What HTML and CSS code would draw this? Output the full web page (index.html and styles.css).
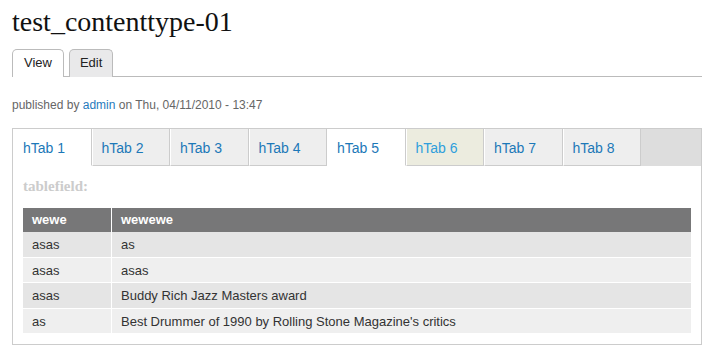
FILE: index.html
```
<!DOCTYPE html>
<html>
<head>
<meta charset="utf-8">
<link rel="stylesheet" href="styles.css">
</head>
<body>
<div class="page">
  <h1 class="title">test_contenttype-01</h1>
  <ul class="local-tabs">
    <li class="ltab active">View</li>
    <li class="ltab">Edit</li>
  </ul>
  <p class="submitted">published by <a class="user" href="#">admin</a> on Thu, 04/11/2010 - 13:47</p>
  <div class="htabs">
    <ul class="htab-list">
      <li class="htab active"><a href="#">hTab 1</a></li>
      <li class="htab"><a href="#">hTab 2</a></li>
      <li class="htab"><a href="#">hTab 3</a></li>
      <li class="htab"><a href="#">hTab 4</a></li>
      <li class="htab active"><a href="#">hTab 5</a></li>
      <li class="htab hover"><a href="#">hTab 6</a></li>
      <li class="htab"><a href="#">hTab 7</a></li>
      <li class="htab"><a href="#">hTab 8</a></li>
    </ul>
    <div class="panel">
      <div class="field-label">tablefield:</div>
      <table class="tf">
        <thead>
          <tr><th class="c1">wewe</th><th>wewewe</th></tr>
        </thead>
        <tbody>
          <tr class="odd"><td class="c1">asas</td><td>as</td></tr>
          <tr class="even"><td class="c1">asas</td><td>asas</td></tr>
          <tr class="odd"><td class="c1">asas</td><td>Buddy Rich Jazz Masters award</td></tr>
          <tr class="even last"><td class="c1">as</td><td>Best Drummer of 1990 by Rolling Stone Magazine's critics</td></tr>
        </tbody>
      </table>
    </div>
  </div>
</div>
</body>
</html>
```
FILE: styles.css
```
html, body {
  margin: 0;
  padding: 0;
  background: #fff;
}
.page {
  width: 690px;
  padding-left: 12px;
  font-family: "Liberation Sans", Arial, sans-serif;
}
.title {
  margin: 6px 0 0;
  font-family: "Liberation Serif", "Times New Roman", serif;
  font-weight: normal;
  font-size: 28px;
  line-height: 32px;
  color: #111;
}
.local-tabs {
  list-style: none;
  margin: 11px 0 0;
  padding: 0;
  display: flex;
  gap: 5px;
  border-bottom: 1px solid #bbb;
  height: 27px;
}
.ltab {
  box-sizing: border-box;
  height: 28px;
  padding: 0 10px;
  border: 1px solid #bbb;
  border-bottom: none;
  border-radius: 5px 5px 0 0;
  background: #e9e9ea;
  font-size: 13px;
  line-height: 26px;
  color: #222;
}
.ltab.active {
  background: #fff;
  padding: 0 11px;
}
.submitted {
  margin: 20px 0 0;
  font-size: 12px;
  line-height: 16px;
  color: #666;
}
.submitted .user {
  color: #1f7bbd;
  text-decoration: none;
}
.htabs {
  box-sizing: border-box;
  margin-top: 15px;
  border: 1px solid #ccc;
  padding-bottom: 11px;
}
.htab-list {
  list-style: none;
  margin: 0;
  padding: 0;
  display: flex;
  background: #dddddd;
  height: 37px;
}
.htab {
  box-sizing: border-box;
  flex: 0 0 78.5px;
  height: 37px;
  padding: 3px 0 0 9px;
  background: #eeeeee;
  border-left: 1px solid #fff;
  border-right: 1px solid #ccc;
  border-bottom: 1px solid #ccc;
  font-size: 14px;
  line-height: 33px;
}
.htab a {
  color: #1c78b8;
  text-decoration: none;
}
.htab.active {
  background: #fff;
  border-bottom-color: #fff;
}
.htab.hover {
  background: #ececdf;
}
.htab.hover a {
  color: #2f9fdc;
}
.panel {
  padding: 0 10px;
}
.field-label {
  margin-top: 11px;
  font-family: "Liberation Serif", "Times New Roman", serif;
  font-weight: bold;
  font-size: 15px;
  line-height: 18px;
  color: #cccccc;
}
.tf {
  margin-top: 13px;
  width: 100%;
  border-collapse: collapse;
  font-size: 13px;
}
.tf th {
  background: #777778;
  color: #fff;
  font-weight: bold;
  text-align: left;
  height: 24px;
  padding: 0 9px;
  line-height: 24px;
  box-sizing: border-box;
}
.tf td {
  padding: 2px 9px 0;
  line-height: 22.5px;
  color: #333;
  border-bottom: 1px solid #fff;
}
.tf tr.last td {
  border-bottom: none;
}
.tf .c1 {
  width: 70px;
  border-right: 1px solid #fff;
}
.tf tr.odd td {
  background: #e5e5e5;
}
.tf tr.even td {
  background: #efefef;
}
```
